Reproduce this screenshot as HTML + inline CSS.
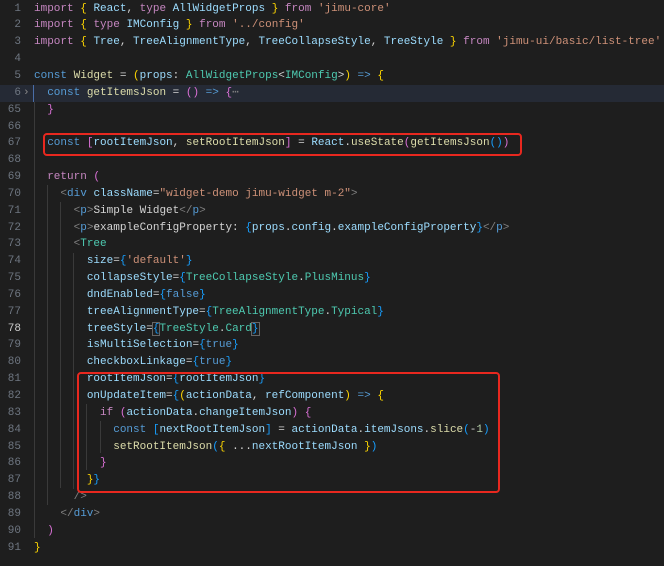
<!DOCTYPE html>
<html><head><meta charset="utf-8"><style>
html,body{margin:0;padding:0;background:#1e1e1e;width:664px;height:566px;overflow:hidden}
#code{position:absolute;left:0;top:0.6px;width:664px}
.ln{position:relative;width:664px;height:16.85px;line-height:16.85px;font-family:"Liberation Mono",monospace;font-size:11px;white-space:pre;color:#d4d4d4}
.no{position:absolute;left:0;width:21px;text-align:right;color:#6e7681}
.c{position:absolute;left:34px}
.k{color:#c586c0}.b{color:#569cd6}.v{color:#9cdcfe}.t{color:#4ec9b0}.s{color:#ce9178}.f{color:#dcdcaa}
.y{color:#ffd700}.p{color:#da70d6}.l{color:#179fff}.g{color:#808080}.w{color:#d4d4d4}
.box{position:absolute;border:2px solid #e8281f;border-radius:4px}
.gd{position:absolute;width:1px;background:#3a3a3a}
</style></head><body>
<div class="gd" style="left:34px;top:101px;height:437px"></div>
<div class="gd" style="left:47px;top:185px;height:320px"></div>
<div class="gd" style="left:60px;top:202px;height:286px"></div>
<div class="gd" style="left:73px;top:253px;height:236px"></div>
<div class="gd" style="left:86px;top:404px;height:66px"></div>
<div class="gd" style="left:100px;top:421px;height:32px"></div>
<div id="code">
<div class="ln"><span class="no">1</span><span class="c"><span class="k">import</span> <span class="y">{</span> <span class="v">React</span>, <span class="k">type</span> <span class="v">AllWidgetProps</span> <span class="y">}</span> <span class="k">from</span> <span class="s">'jimu-core'</span></span></div>
<div class="ln"><span class="no">2</span><span class="c"><span class="k">import</span> <span class="y">{</span> <span class="k">type</span> <span class="v">IMConfig</span> <span class="y">}</span> <span class="k">from</span> <span class="s">'../config'</span></span></div>
<div class="ln"><span class="no">3</span><span class="c"><span class="k">import</span> <span class="y">{</span> <span class="v">Tree</span>, <span class="v">TreeAlignmentType</span>, <span class="v">TreeCollapseStyle</span>, <span class="v">TreeStyle</span> <span class="y">}</span> <span class="k">from</span> <span class="s">'jimu-ui/basic/list-tree'</span></span></div>
<div class="ln"><span class="no">4</span></div>
<div class="ln"><span class="no">5</span><span class="c"><span class="b">const</span> <span class="f">Widget</span> = <span class="y">(</span><span class="v">props</span>: <span class="t">AllWidgetProps</span>&lt;<span class="t">IMConfig</span>&gt;<span class="y">)</span> <span class="b">=&gt;</span> <span class="y">{</span></span></div>
<div class="ln" style="background:#252a35"><span style="position:absolute;left:33px;top:0;width:1px;height:100%;background:#4a6ea8"></span><span class="no">6</span><span style="position:absolute;left:23px;color:#8a8a8a">›</span><span class="c">  <span class="b">const</span> <span class="f">getItemsJson</span> = <span class="p">()</span> <span class="b">=&gt;</span> <span class="p">{</span><span class="g">⋯</span></span></div>
<div class="ln"><span class="no">65</span><span class="c">  <span class="p">}</span></span></div>
<div class="ln"><span class="no">66</span></div>
<div class="ln"><span class="no">67</span><span class="c">  <span class="b">const</span> <span class="p">[</span><span class="v">rootItemJson</span>, <span class="f">setRootItemJson</span><span class="p">]</span> = <span class="v">React</span>.<span class="f">useState</span><span class="p">(</span><span class="f">getItemsJson</span><span class="l">()</span><span class="p">)</span></span></div>
<div class="ln"><span class="no">68</span></div>
<div class="ln"><span class="no">69</span><span class="c">  <span class="k">return</span> <span class="p">(</span></span></div>
<div class="ln"><span class="no">70</span><span class="c">    <span class="g">&lt;</span><span class="b">div</span> <span class="v">className</span>=<span class="s">"widget-demo jimu-widget m-2"</span><span class="g">&gt;</span></span></div>
<div class="ln"><span class="no">71</span><span class="c">      <span class="g">&lt;</span><span class="b">p</span><span class="g">&gt;</span>Simple Widget<span class="g">&lt;/</span><span class="b">p</span><span class="g">&gt;</span></span></div>
<div class="ln"><span class="no">72</span><span class="c">      <span class="g">&lt;</span><span class="b">p</span><span class="g">&gt;</span>exampleConfigProperty: <span class="l">{</span><span class="v">props</span>.<span class="v">config</span>.<span class="v">exampleConfigProperty</span><span class="l">}</span><span class="g">&lt;/</span><span class="b">p</span><span class="g">&gt;</span></span></div>
<div class="ln"><span class="no">73</span><span class="c">      <span class="g">&lt;</span><span class="t">Tree</span></span></div>
<div class="ln"><span class="no">74</span><span class="c">        <span class="v">size</span>=<span class="l">{</span><span class="s">'default'</span><span class="l">}</span></span></div>
<div class="ln"><span class="no">75</span><span class="c">        <span class="v">collapseStyle</span>=<span class="l">{</span><span class="t">TreeCollapseStyle</span>.<span class="t">PlusMinus</span><span class="l">}</span></span></div>
<div class="ln"><span class="no">76</span><span class="c">        <span class="v">dndEnabled</span>=<span class="l">{</span><span class="b">false</span><span class="l">}</span></span></div>
<div class="ln"><span class="no">77</span><span class="c">        <span class="v">treeAlignmentType</span>=<span class="l">{</span><span class="t">TreeAlignmentType</span>.<span class="t">Typical</span><span class="l">}</span></span></div>
<div class="ln"><span class="no" style="color:#ccc">78</span><span class="c">        <span class="v">treeStyle</span>=<span class="l" style="outline:1px solid #666">{</span><span class="t">TreeStyle</span>.<span class="t">Card</span><span class="l" style="outline:1px solid #666">}</span></span></div>
<div class="ln"><span class="no">79</span><span class="c">        <span class="v">isMultiSelection</span>=<span class="l">{</span><span class="b">true</span><span class="l">}</span></span></div>
<div class="ln"><span class="no">80</span><span class="c">        <span class="v">checkboxLinkage</span>=<span class="l">{</span><span class="b">true</span><span class="l">}</span></span></div>
<div class="ln"><span class="no">81</span><span class="c">        <span class="v">rootItemJson</span>=<span class="l">{</span><span class="v">rootItemJson</span><span class="l">}</span></span></div>
<div class="ln"><span class="no">82</span><span class="c">        <span class="v">onUpdateItem</span>=<span class="l">{</span><span class="y">(</span><span class="v">actionData</span>, <span class="v">refComponent</span><span class="y">)</span> <span class="b">=&gt;</span> <span class="y">{</span></span></div>
<div class="ln"><span class="no">83</span><span class="c">          <span class="k">if</span> <span class="p">(</span><span class="v">actionData</span>.<span class="v">changeItemJson</span><span class="p">)</span> <span class="p">{</span></span></div>
<div class="ln"><span class="no">84</span><span class="c">            <span class="b">const</span> <span class="l">[</span><span class="v">nextRootItemJson</span><span class="l">]</span> = <span class="v">actionData</span>.<span class="v">itemJsons</span>.<span class="f">slice</span><span class="l">(</span>-<span style="color:#b5cea8">1</span><span class="l">)</span></span></div>
<div class="ln"><span class="no">85</span><span class="c">            <span class="f">setRootItemJson</span><span class="l">(</span><span class="y">{</span> ...<span class="v">nextRootItemJson</span> <span class="y">}</span><span class="l">)</span></span></div>
<div class="ln"><span class="no">86</span><span class="c">          <span class="p">}</span></span></div>
<div class="ln"><span class="no">87</span><span class="c">        <span class="y">}</span><span class="l">}</span></span></div>
<div class="ln"><span class="no">88</span><span class="c">      <span class="g">/&gt;</span></span></div>
<div class="ln"><span class="no">89</span><span class="c">    <span class="g">&lt;/</span><span class="b">div</span><span class="g">&gt;</span></span></div>
<div class="ln"><span class="no">90</span><span class="c">  <span class="p">)</span></span></div>
<div class="ln"><span class="no">91</span><span class="c"><span class="y">}</span></span></div>
</div>
<div class="box" style="left:43px;top:133px;width:475px;height:19px"></div>
<div class="box" style="left:77px;top:372px;width:419px;height:117px"></div>
</body></html>
